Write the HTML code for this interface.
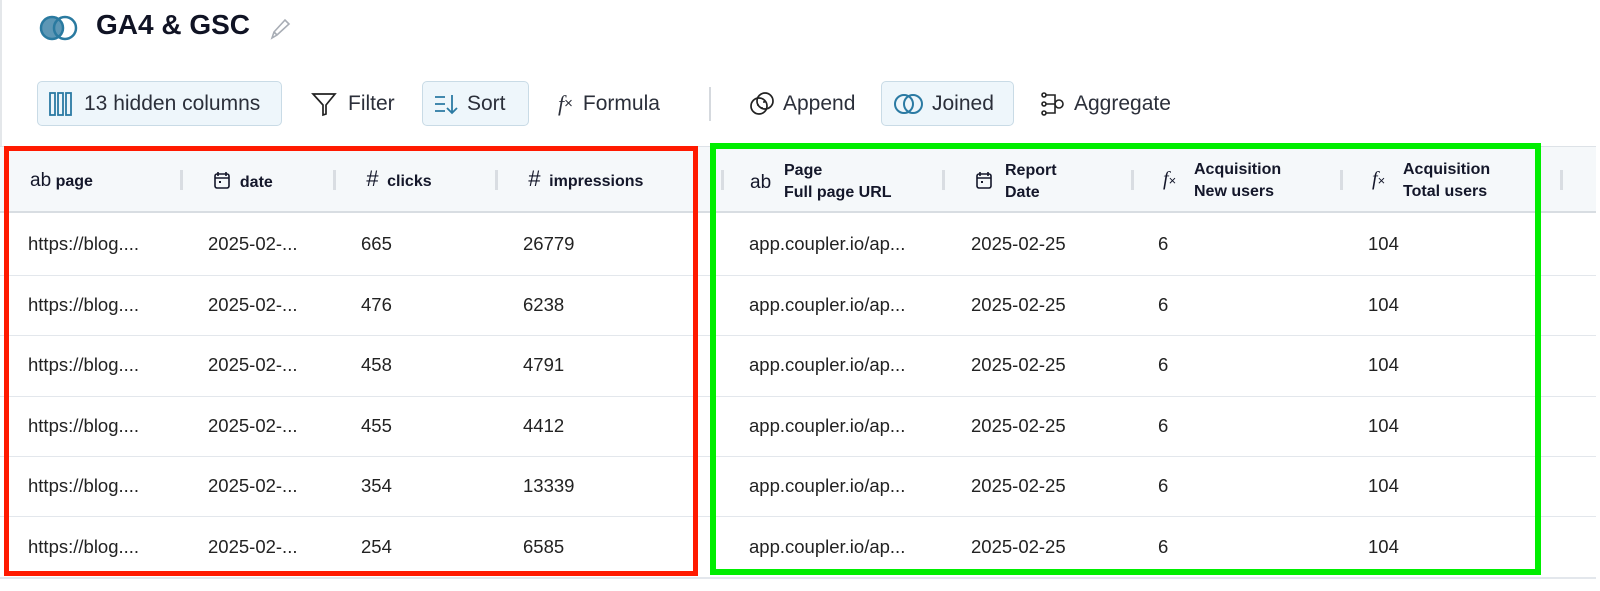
<!DOCTYPE html>
<html><head><meta charset="utf-8"><style>
*{margin:0;padding:0;box-sizing:border-box}
body{width:1600px;height:591px;overflow:hidden;background:#fff;font-family:"Liberation Sans",sans-serif;color:#1a1d2b;position:relative}
.abs{position:absolute}
.title{left:96px;top:9px;font-size:28px;font-weight:bold;color:#101324}
.btn{position:absolute;top:81px;height:45px;display:flex;align-items:center;font-size:21px;color:#2b2f3a;padding:0 10px}
.btn.on{background:#eef6fb;border:1px solid #c9dbe6;border-radius:5px}
.hdr{left:0;top:146px;width:1596px;height:67px;background:#f5f8fa;border-top:1px solid #dde2e7;border-bottom:2px solid #d8dde2}
.sep{position:absolute;top:170px;width:3px;height:20px;background:#d9dde2}
.hl{position:absolute;font-size:16px;font-weight:bold;color:#14172a;line-height:22px}
.line{position:absolute;left:0;width:1596px;height:1px;background:#e3e7ec}
.c{position:absolute;font-size:18.5px;color:#222}
</style></head><body>
<div class="abs" style="left:0;top:0;width:2px;height:146px;background:#e4e7ea"></div>
<svg class="abs" style="left:38px;top:14px" width="42" height="28" viewBox="0 0 42 28"><circle cx="14" cy="14" r="11" fill="#5d97b5" stroke="#2a7aa0" stroke-width="2.5"/><circle cx="27" cy="14" r="11" fill="none" stroke="#2a7aa0" stroke-width="2.5"/></svg>
<div class="abs title">GA4 &amp; GSC</div>
<svg class="abs" style="left:268px;top:16px" width="24" height="26" viewBox="0 0 24 26"><path d="M4 22l2-6L17 4l4 4L9 19z M6 16l3 3" fill="none" stroke="#a8adb5" stroke-width="1.6"/></svg>

<div class="btn on" style="left:37px;width:245px"><svg width="26" height="26" viewBox="0 0 26 26"><g fill="none" stroke="#2b7aa3" stroke-width="1.8"><rect x="2" y="2" width="5" height="22"/><rect x="10" y="2" width="5" height="22"/><rect x="18" y="2" width="5" height="22"/></g></svg><span style="margin-left:10px">13 hidden columns</span></div>
<div class="btn" style="left:300px"><svg width="30" height="26" viewBox="0 0 30 26"><path d="M3 3h22L16 14v9l-3 1V14z" fill="none" stroke="#222" stroke-width="1.7"/></svg><span style="margin-left:8px">Filter</span></div>
<div class="btn on" style="left:422px;width:107px"><svg width="28" height="26" viewBox="0 0 28 26"><g stroke="#2b7aa3" stroke-width="1.8" fill="none"><path d="M2 6h10M2 13h10M2 20h10M19 4v18M14 17l5 5 5-5"/></g></svg><span style="margin-left:6px">Sort</span></div>
<div class="btn" style="left:548px"><span style="font-family:'Liberation Serif',serif;font-style:italic;font-size:22px">f</span><span style="font-size:15px;margin-right:10px">×</span><span>Formula</span></div>
<div class="abs" style="left:709px;top:87px;width:2px;height:34px;background:#d5d9de"></div>
<div class="btn" style="left:737px"><svg width="30" height="28" viewBox="0 0 30 28"><g fill="none" stroke="#222" stroke-width="1.7"><circle cx="12" cy="16" r="8"/><circle cx="18" cy="11" r="8"/></g><g fill="#222"><circle cx="11" cy="15" r="1"/><circle cx="15" cy="18" r="1"/><circle cx="17" cy="12" r="1"/></g></svg><span style="margin-left:6px">Append</span></div>
<div class="btn on" style="left:881px;width:133px"><svg width="34" height="26" viewBox="0 0 34 26"><g fill="none" stroke="#2b7aa3" stroke-width="2"><circle cx="12" cy="13" r="9"/><circle cx="21" cy="13" r="9"/></g></svg><span style="margin-left:6px">Joined</span></div>
<div class="btn" style="left:1030px"><svg width="28" height="28" viewBox="0 0 28 28"><g fill="none" stroke="#222" stroke-width="1.6"><circle cx="4" cy="5" r="2"/><circle cx="4" cy="14" r="2"/><circle cx="4" cy="23" r="2"/><path d="M6 5h9v18H6M6 14h9"/><circle cx="19" cy="14" r="4"/></g></svg><span style="margin-left:6px">Aggregate</span></div>

<div class="abs hdr"></div>
<div class="sep" style="left:180px"></div><div class="sep" style="left:333px"></div><div class="sep" style="left:495px"></div><div class="sep" style="left:721px"></div><div class="sep" style="left:942px"></div><div class="sep" style="left:1131px"></div><div class="sep" style="left:1340px"></div><div class="sep" style="left:1560px"></div>

<div class="hl" style="left:30px;top:170px"><span style="font-weight:normal;font-size:19px">ab</span> page</div>
<div class="hl" style="left:213px;top:170px"><svg width="18" height="20" viewBox="0 0 18 20" style="vertical-align:-3px"><g fill="none" stroke="#14172a" stroke-width="1.6"><rect x="2" y="4" width="14" height="14" rx="2"/><path d="M5 2v4M13 2v4M2 8h14"/></g><rect x="6" y="11" width="2" height="2" fill="#14172a"/></svg>&nbsp; date</div>
<div class="hl" style="left:366px;top:168px"><span style="font-weight:normal;font-size:22px;font-style:italic">#</span>&nbsp; clicks</div>
<div class="hl" style="left:528px;top:168px"><span style="font-weight:normal;font-size:22px;font-style:italic">#</span>&nbsp; impressions</div>

<div class="hl" style="left:750px;top:172px;font-weight:normal;font-size:19px">ab</div>
<div class="hl" style="left:784px;top:160px">Page<br>Full page URL</div>
<svg class="abs" style="left:975px;top:170px" width="18" height="20" viewBox="0 0 18 20"><g fill="none" stroke="#14172a" stroke-width="1.6"><rect x="2" y="4" width="14" height="14" rx="2"/><path d="M5 2v4M13 2v4M2 8h14"/></g><rect x="6" y="11" width="2" height="2" fill="#14172a"/></svg>
<div class="hl" style="left:1005px;top:160px">Report<br>Date</div>
<div class="hl" style="left:1163px;top:168px;font-weight:normal"><span style="font-family:'Liberation Serif',serif;font-style:italic;font-size:20px">f</span><span style="font-size:13px">×</span></div>
<div class="hl" style="left:1194px;top:159px">Acquisition<br>New users</div>
<div class="hl" style="left:1372px;top:168px;font-weight:normal"><span style="font-family:'Liberation Serif',serif;font-style:italic;font-size:20px">f</span><span style="font-size:13px">×</span></div>
<div class="hl" style="left:1403px;top:159px">Acquisition<br>Total users</div>

<div class="line" style="top:275px"></div><div class="line" style="top:335px"></div><div class="line" style="top:396px"></div><div class="line" style="top:456px"></div><div class="line" style="top:516px"></div><div class="line" style="top:577px;height:2px"></div>

<div id="rows"></div>
<script>
var ys=[233,294,354,415,475,536];var cl=[665,476,458,455,354,254],im=[26779,6238,4791,4412,13339,6585];
var h='';ys.forEach(function(y,i){
h+='<div class="c" style="left:28px;top:'+y+'px">https://blog....</div>';
h+='<div class="c" style="left:208px;top:'+y+'px">2025-02-...</div>';
h+='<div class="c" style="left:361px;top:'+y+'px">'+cl[i]+'</div>';
h+='<div class="c" style="left:523px;top:'+y+'px">'+im[i]+'</div>';
h+='<div class="c" style="left:749px;top:'+y+'px">app.coupler.io/ap...</div>';
h+='<div class="c" style="left:971px;top:'+y+'px">2025-02-25</div>';
h+='<div class="c" style="left:1158px;top:'+y+'px">6</div>';
h+='<div class="c" style="left:1368px;top:'+y+'px">104</div>';});
document.getElementById('rows').innerHTML=h;
</script>
<div class="abs" style="left:4px;top:146px;width:694px;height:430px;border:5px solid #ff1a00"></div>
<div class="abs" style="left:710px;top:143px;width:831px;height:432px;border:6px solid #00ee00"></div>
</body></html>
